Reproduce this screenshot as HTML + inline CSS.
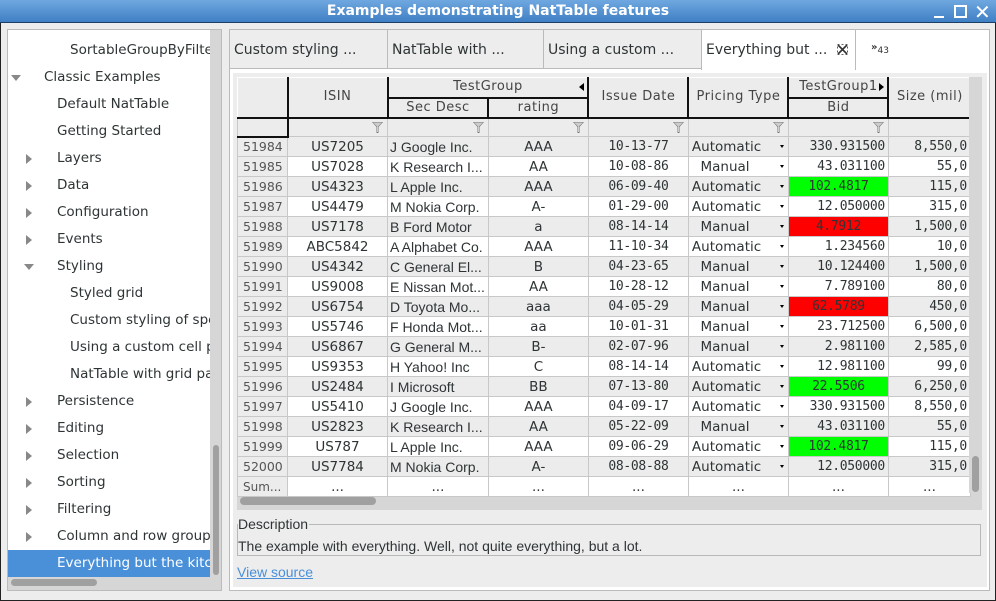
<!DOCTYPE html>
<html><head><meta charset="utf-8">
<style>
*{box-sizing:border-box;margin:0;padding:0}
body{width:996px;height:601px;overflow:hidden;background:#ededed;font-family:"DejaVu Sans","Liberation Sans",sans-serif;font-size:13px;color:#2e3436;position:relative}
.abs{position:absolute}
#title{left:0;top:0;width:996px;height:23px;background:linear-gradient(#6fa8e0,#3f7fc4);border-bottom:1px solid #1c3f66;color:#fff;font-weight:bold;font-size:14px;text-align:center;line-height:23px}
#frame{left:0;top:23px;width:996px;height:578px;border:1px solid #222;border-top:none}
#tree{left:7px;top:29px;width:215px;height:562px;background:#fff;border:1px solid #bbb;overflow:hidden}
.ti{position:absolute;height:27px;line-height:27px;white-space:nowrap;color:#2e3436;font-size:13.5px}
.arr{position:absolute;width:0;height:0}
.ar{border-top:5px solid transparent;border-bottom:5px solid transparent;border-left:6px solid #888}
.ad{border-left:5px solid transparent;border-right:5px solid transparent;border-top:6px solid #888}
#tabs{left:229px;top:29px;width:761px;height:562px;border:1px solid #bbb;background:#fff}
.tab{position:absolute;top:29px;height:40px;border:1px solid #bbb;background:#ededed;line-height:40px;padding-left:4px;font-size:14px;white-space:nowrap;overflow:hidden}
#inner{left:233px;top:73px;width:754px;height:514px;background:#ededed}
table{border-collapse:collapse;table-layout:fixed;position:absolute;left:237px;top:77px}
td{height:20px;border:1px solid #c8c8c8;padding:0 3px;white-space:nowrap;overflow:hidden;text-align:center;font-size:13.5px;line-height:18px}
td.rh{background:#ececec;color:#555;font-size:12.5px;text-align:left;padding-left:5px}
tr.e td{background:#ececec}
tr.o td{background:#fff}
tr td.rh{background:#ececec}
td.m{font-family:"DejaVu Sans Mono","Liberation Mono",monospace;font-size:13px;letter-spacing:-0.3px}
td.r{text-align:right}
td.l{text-align:left;padding-left:2px;font-family:"Liberation Sans",sans-serif;font-size:14px}
td.g{background:#00ff00!important}
td.red{background:#ff0000!important}
td.p{text-align:left;position:relative}
td.p:after{content:"";position:absolute;right:4px;top:8px;border-left:2.5px solid transparent;border-right:2.5px solid transparent;border-top:3px solid #000}
.h{background:#ececec;border-top:1px solid #fff;border-left:1px solid #fff;border-right:2px solid #111;border-bottom:2px solid #111;color:#444;font-size:13px;letter-spacing:0.5px}
.f{background:#ececec;border-right:1px solid #c8c8c8;border-bottom:1px solid #c8c8c8;position:relative;height:19px}
.fil{position:absolute;right:4px;top:3px;width:11px;height:11px}
</style></head><body>
<div id="title" class="abs">Examples demonstrating NatTable features</div>
<div class="abs" style="left:934px;width:10px;height:2px;background:#fff;top:16px"></div>
<div class="abs" style="left:954px;top:5px;width:13px;height:13px;border:2px solid #fff"></div>
<div class="abs" style="left:974px;top:2px;color:#fff;font-size:20px;line-height:20px">✕</div>
<div id="frame" class="abs"></div>

<div id="tree" class="abs">
<div class="abs" style="left:0;top:0;width:203px;height:560px;overflow:hidden">
<div class="ti" style="left:62px;top:7px">SortableGroupByFilte</div>
<div class="arr ad" style="left:3px;top:45px"></div><div class="ti" style="left:36px;top:34px">Classic Examples</div>
<div class="ti" style="left:49px;top:61px">Default NatTable</div>
<div class="ti" style="left:49px;top:88px">Getting Started</div>
<div class="arr ar" style="left:18px;top:124px"></div><div class="ti" style="left:49px;top:115px">Layers</div>
<div class="arr ar" style="left:18px;top:151px"></div><div class="ti" style="left:49px;top:142px">Data</div>
<div class="arr ar" style="left:18px;top:178px"></div><div class="ti" style="left:49px;top:169px">Configuration</div>
<div class="arr ar" style="left:18px;top:205px"></div><div class="ti" style="left:49px;top:196px">Events</div>
<div class="arr ad" style="left:16px;top:234px"></div><div class="ti" style="left:49px;top:223px">Styling</div>
<div class="ti" style="left:62px;top:250px">Styled grid</div>
<div class="ti" style="left:62px;top:277px">Custom styling of spe</div>
<div class="ti" style="left:62px;top:304px">Using a custom cell pa</div>
<div class="ti" style="left:62px;top:331px">NatTable with grid pa</div>
<div class="arr ar" style="left:18px;top:367px"></div><div class="ti" style="left:49px;top:358px">Persistence</div>
<div class="arr ar" style="left:18px;top:394px"></div><div class="ti" style="left:49px;top:385px">Editing</div>
<div class="arr ar" style="left:18px;top:421px"></div><div class="ti" style="left:49px;top:412px">Selection</div>
<div class="arr ar" style="left:18px;top:448px"></div><div class="ti" style="left:49px;top:439px">Sorting</div>
<div class="arr ar" style="left:18px;top:475px"></div><div class="ti" style="left:49px;top:466px">Filtering</div>
<div class="arr ar" style="left:18px;top:502px"></div><div class="ti" style="left:49px;top:493px">Column and row groupin</div>
<div class="abs" style="left:0;top:520px;width:203px;height:27px;background:#4a90d9"></div>
<div class="ti" style="left:49px;top:520px;color:#fff">Everything but the kitch</div>
</div>
<div class="abs" style="left:202px;top:0;width:12px;height:548px;background:#d6d6d6"></div>
<div class="abs" style="left:205px;top:415px;width:6px;height:130px;background:#a0a0a0;border-radius:3px"></div>
<div class="abs" style="left:0;top:547px;width:214px;height:14px;background:#d6d6d6"></div>
<div class="abs" style="left:3px;top:549px;width:86px;height:7px;background:#a0a0a0;border-radius:4px"></div>
</div>

<div id="tabs" class="abs"></div>
<div class="tab" style="left:229px;width:159px">Custom styling ...</div>
<div class="tab" style="left:387px;width:157px">NatTable with ...</div>
<div class="tab" style="left:543px;width:159px">Using a custom ...</div>
<div class="tab" style="left:701px;width:155px;background:#fff;border-bottom:none;height:41px">Everything but ...<svg style="position:absolute;left:135px;top:14px" width="11" height="11" viewBox="0 0 11 11"><path d="M1 1L10 10M10 1L1 10" stroke="#333" stroke-width="1.6"/><rect x="0.5" y="0.5" width="10" height="10" fill="none" stroke="#333" stroke-width="0.8" stroke-dasharray="2 2"/></svg></div>
<div class="abs" style="left:871px;top:42px;font-size:10px;font-weight:bold">»<span style="font-weight:normal;font-size:9px;position:relative;top:3px">43</span></div>
<div id="inner" class="abs"></div>
<div class="abs" style="left:237px;top:77px;width:745px;height:433px;background:#d6d6d6"></div>
<svg width="0" height="0" style="position:absolute"><defs><symbol id="fl" viewBox="0 0 11 11"><path d="M0 0H11L6.5 5V11H4.5V5Z" fill="#777"/><path d="M1 0.5H10L6 4.5V10H5V4.5Z" fill="#ccc"/></symbol></defs></svg>
<table>
<colgroup><col style="width:50px"><col style="width:100px"><col style="width:100px"><col style="width:100px"><col style="width:100px"><col style="width:100px"><col style="width:100px"><col style="width:82px"></colgroup>
<tr><td class="h" rowspan="2" style="height:40px"></td><td class="h" rowspan="2">ISIN</td><td class="h" colspan="2" style="position:relative">TestGroup<span style="position:absolute;right:3px;top:5px;border-top:4px solid transparent;border-bottom:4px solid transparent;border-right:5px solid #000"></span></td><td class="h" rowspan="2">Issue Date</td><td class="h" rowspan="2">Pricing Type</td><td class="h" style="position:relative">TestGroup1<span style="position:absolute;right:3px;top:5px;border-top:4px solid transparent;border-bottom:4px solid transparent;border-left:5px solid #000"></span></td><td class="h" rowspan="2" style="border-right:none">Size (mil)</td></tr>
<tr><td class="h">Sec Desc</td><td class="h">rating</td><td class="h">Bid</td></tr>
<tr><td class="f" style="border-bottom:2px solid #111;border-right:2px solid #111"></td><td class="f"><svg class="fil"><use href="#fl"/></svg></td><td class="f"><svg class="fil"><use href="#fl"/></svg></td><td class="f"><svg class="fil"><use href="#fl"/></svg></td><td class="f"><svg class="fil"><use href="#fl"/></svg></td><td class="f"><svg class="fil"><use href="#fl"/></svg></td><td class="f"><svg class="fil"><use href="#fl"/></svg></td><td class="f"></td></tr>
<tr class="e"><td class="rh">51984</td><td>US7205</td><td class="l">J Google Inc.</td><td>AAA</td><td class="m">10-13-77</td><td class="p">Automatic</td><td class="m r">330.931500</td><td class="m r">8,550,0</td></tr>
<tr class="o"><td class="rh">51985</td><td>US7028</td><td class="l">K Research I...</td><td>AA</td><td class="m">10-08-86</td><td class="p">&nbsp;&nbsp;Manual</td><td class="m r">43.031100</td><td class="m r">55,0</td></tr>
<tr class="e"><td class="rh">51986</td><td>US4323</td><td class="l">L Apple Inc.</td><td>AAA</td><td class="m">06-09-40</td><td class="p">Automatic</td><td class="m g">102.4817</td><td class="m r">115,0</td></tr>
<tr class="o"><td class="rh">51987</td><td>US4479</td><td class="l">M Nokia Corp.</td><td>A-</td><td class="m">01-29-00</td><td class="p">Automatic</td><td class="m r">12.050000</td><td class="m r">315,0</td></tr>
<tr class="e"><td class="rh">51988</td><td>US7178</td><td class="l">B Ford Motor</td><td>a</td><td class="m">08-14-14</td><td class="p">&nbsp;&nbsp;Manual</td><td class="m red">4.7912</td><td class="m r">1,500,0</td></tr>
<tr class="o"><td class="rh">51989</td><td>ABC5842</td><td class="l">A Alphabet Co.</td><td>AAA</td><td class="m">11-10-34</td><td class="p">Automatic</td><td class="m r">1.234560</td><td class="m r">10,0</td></tr>
<tr class="e"><td class="rh">51990</td><td>US4342</td><td class="l">C General El...</td><td>B</td><td class="m">04-23-65</td><td class="p">&nbsp;&nbsp;Manual</td><td class="m r">10.124400</td><td class="m r">1,500,0</td></tr>
<tr class="o"><td class="rh">51991</td><td>US9008</td><td class="l">E Nissan Mot...</td><td>AA</td><td class="m">10-28-12</td><td class="p">&nbsp;&nbsp;Manual</td><td class="m r">7.789100</td><td class="m r">80,0</td></tr>
<tr class="e"><td class="rh">51992</td><td>US6754</td><td class="l">D Toyota Mo...</td><td>aaa</td><td class="m">04-05-29</td><td class="p">&nbsp;&nbsp;Manual</td><td class="m red">62.5789</td><td class="m r">450,0</td></tr>
<tr class="o"><td class="rh">51993</td><td>US5746</td><td class="l">F Honda Mot...</td><td>aa</td><td class="m">10-01-31</td><td class="p">&nbsp;&nbsp;Manual</td><td class="m r">23.712500</td><td class="m r">6,500,0</td></tr>
<tr class="e"><td class="rh">51994</td><td>US6867</td><td class="l">G General M...</td><td>B-</td><td class="m">02-07-96</td><td class="p">&nbsp;&nbsp;Manual</td><td class="m r">2.981100</td><td class="m r">2,585,0</td></tr>
<tr class="o"><td class="rh">51995</td><td>US9353</td><td class="l">H Yahoo! Inc</td><td>C</td><td class="m">08-14-14</td><td class="p">Automatic</td><td class="m r">12.981100</td><td class="m r">99,0</td></tr>
<tr class="e"><td class="rh">51996</td><td>US2484</td><td class="l">I Microsoft</td><td>BB</td><td class="m">07-13-80</td><td class="p">Automatic</td><td class="m g">22.5506</td><td class="m r">6,250,0</td></tr>
<tr class="o"><td class="rh">51997</td><td>US5410</td><td class="l">J Google Inc.</td><td>AAA</td><td class="m">04-09-17</td><td class="p">Automatic</td><td class="m r">330.931500</td><td class="m r">8,550,0</td></tr>
<tr class="e"><td class="rh">51998</td><td>US2823</td><td class="l">K Research I...</td><td>AA</td><td class="m">05-22-09</td><td class="p">&nbsp;&nbsp;Manual</td><td class="m r">43.031100</td><td class="m r">55,0</td></tr>
<tr class="o"><td class="rh">51999</td><td>US787</td><td class="l">L Apple Inc.</td><td>AAA</td><td class="m">09-06-29</td><td class="p">Automatic</td><td class="m g">102.4817</td><td class="m r">115,0</td></tr>
<tr class="e"><td class="rh">52000</td><td>US7784</td><td class="l">M Nokia Corp.</td><td>A-</td><td class="m">08-08-88</td><td class="p">Automatic</td><td class="m r">12.050000</td><td class="m r">315,0</td></tr>
<tr class="o"><td class="rh" style="font-size:12px">Sum...</td><td>...</td><td>...</td><td>...</td><td>...</td><td>...</td><td>...</td><td>...</td></tr>
</table>
<div class="abs" style="left:969px;top:77px;width:13px;height:416px;background:#d6d6d6"></div>
<div class="abs" style="left:972px;top:456px;width:7px;height:36px;background:#a0a0a0;border-radius:4px"></div>
<div class="abs" style="left:240px;top:497px;width:136px;height:8px;background:#a0a0a0;border-radius:4px"></div>
<div class="abs" style="left:237px;top:524px;width:744px;height:32px;border:1px solid #b8b8b8"></div>
<div class="abs" style="left:238px;top:516px;background:#ededed;padding-right:1px;font-family:'Liberation Sans',sans-serif;font-size:14px">Description</div>
<div class="abs" style="left:238px;top:538px;font-family:'Liberation Sans',sans-serif;font-size:14px">The example with everything. Well, not quite everything, but a lot.</div>
<div class="abs" style="left:237px;top:564px;font-family:'Liberation Sans',sans-serif;font-size:14px;color:#4a90d9;text-decoration:underline">View source</div>
</body></html>
